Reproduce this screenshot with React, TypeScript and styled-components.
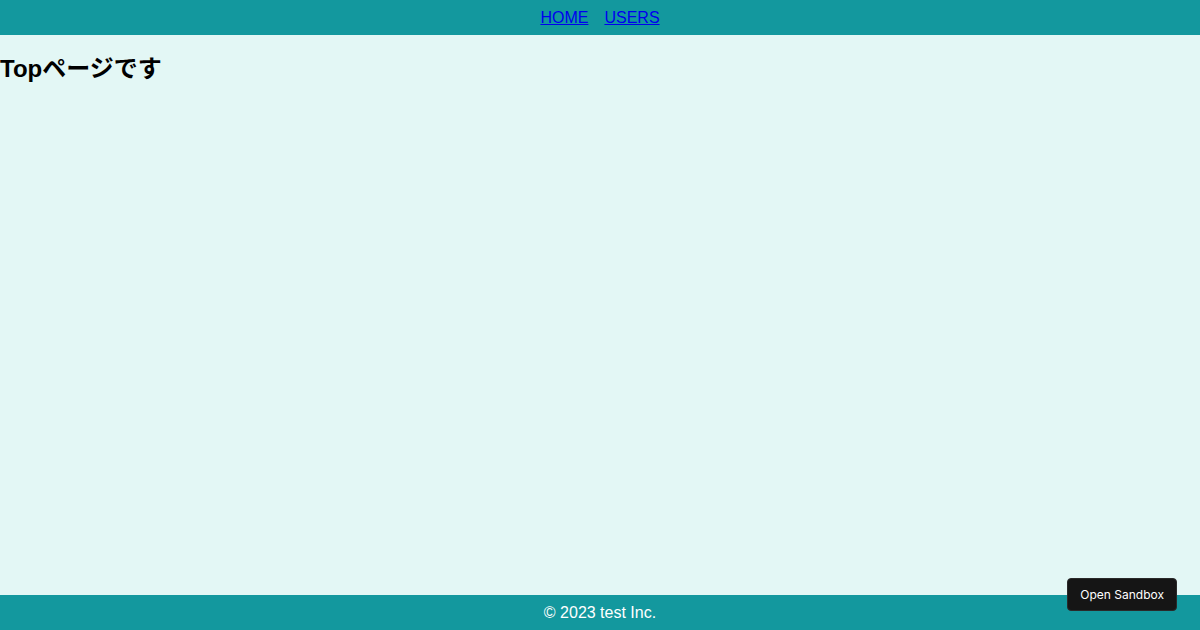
import React from "react";
import styled, { createGlobalStyle } from "styled-components";

const GlobalStyle = createGlobalStyle`
  html, body {
    margin: 0;
    padding: 0;
    height: 100%;
  }
  body {
    font-family: "Liberation Sans", Arial, "Noto Sans CJK JP", sans-serif;
    background-color: #e3f7f5;
  }
  #root {
    min-height: 100%;
  }
`;

const App = () => {
  return (
    <>
      <GlobalStyle />
      <Layout>
        <Header>
          <NavLink href="#">HOME</NavLink>
          <NavLink href="#">USERS</NavLink>
        </Header>
        <Main>
          <Title>Topページです</Title>
        </Main>
        <Footer>&copy; 2023 test Inc.</Footer>
      </Layout>
      <SandboxButton>Open Sandbox</SandboxButton>
    </>
  );
};

export default App;

const Layout = styled.div`
  display: flex;
  flex-direction: column;
  min-height: 100vh;
`;

const Header = styled.header`
  height: 35px;
  background-color: #13989e;
  display: flex;
  justify-content: center;
  align-items: center;
  gap: 16px;
`;

const NavLink = styled.a`
  color: #0000ee;
  font-size: 16px;
  text-decoration: underline;
`;

const Main = styled.main`
  flex: 1;
`;

const Title = styled.h2`
  font-size: 24px;
  font-weight: bold;
  line-height: 27px;
  margin: 20px 0;
  color: #000;
`;

const Footer = styled.footer`
  height: 35px;
  background-color: #13989e;
  color: #ffffff;
  font-size: 16px;
  display: flex;
  justify-content: center;
  align-items: center;
`;

const SandboxButton = styled.button`
  position: fixed;
  right: 23px;
  bottom: 19px;
  height: 33px;
  padding: 0 12px;
  background-color: #151515;
  color: #ffffff;
  border: 1px solid #2a2a2a;
  border-radius: 4px;
  font-family: Inter, "Liberation Sans", sans-serif;
  font-size: 12px;
  cursor: pointer;
`;
